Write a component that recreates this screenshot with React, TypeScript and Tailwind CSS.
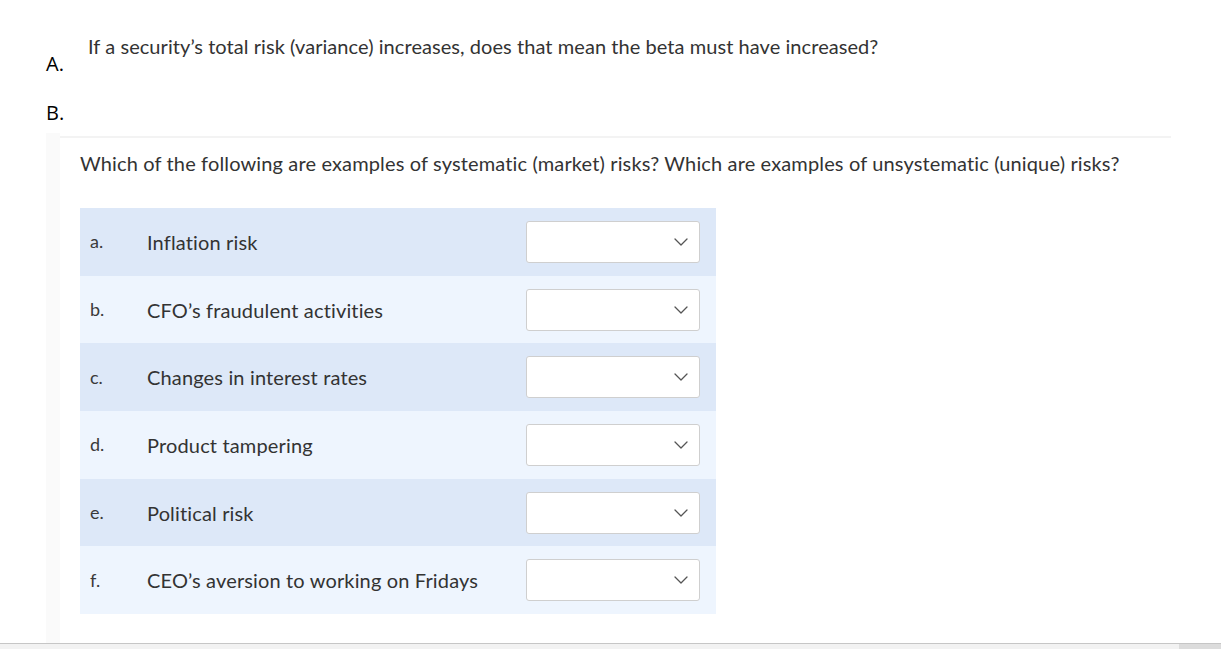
import { ChevronDown } from 'lucide-react';

const rows = [
  { letter: 'a.', text: 'Inflation risk' },
  { letter: 'b.', text: 'CFO’s fraudulent activities' },
  { letter: 'c.', text: 'Changes in interest rates' },
  { letter: 'd.', text: 'Product tampering' },
  { letter: 'e.', text: 'Political risk' },
  { letter: 'f.', text: 'CEO’s aversion to working on Fridays' }
];

const RiskRow = ({ letter, text, shaded }: { letter: string; text: string; shaded: boolean }) => (
  <div className={`flex items-center h-[67.7px] pl-[10px] pr-[16px] ${shaded ? 'bg-[#dde8f8]' : 'bg-[#eef5fe]'}`}>
    <div className="w-[57px] text-[18px] text-[#3a3a3a]">{letter}</div>
    <div className="flex-1 text-[20px] tracking-[0.15px] text-[#333]">{text}</div>
    <div className="w-[174px] h-[42px] bg-white border border-[#cfcfcf] rounded-[3px] flex items-center justify-end pr-[6px]">
      <ChevronDown size={24} strokeWidth={1.3} className="text-[#555]" />
    </div>
  </div>
);

export default function App() {
  return (
    <div className="h-[649px] flex flex-col overflow-hidden bg-white" style={{ fontFamily: 'Lato, "Open Sans", sans-serif' }}>
      <div className="flex-1 flex flex-col pl-[46px] pt-[34px]">
        <div className="flex">
          <div className="w-[42px] pt-[20px] text-[20px] text-black leading-none" style={{ fontFamily: '"Open Sans", sans-serif' }}>
            A.
          </div>
          <div className="text-[20px] tracking-[0.06px] text-[#333] leading-[24px]">
            If a security’s total risk (variance) increases, does that mean the beta must have increased?
          </div>
        </div>
        <div className="mt-[29px] text-[20px] text-black leading-none" style={{ fontFamily: '"Open Sans", sans-serif' }}>
          B.
        </div>
        <div className="mt-[10px] flex flex-1">
          <div className="w-[14px] bg-[#fafafa]" />
          <div className="w-[1111px] flex flex-col">
            <div className="h-[3px]" />
            <div className="border-t-2 border-[#f3f3f3] pl-[20px]">
              <div className="pt-[12px] text-[20px] tracking-[0.14px] text-[#333] leading-[26px]">
                Which of the following are examples of systematic (market) risks? Which are examples of unsystematic (unique) risks?
              </div>
              <div className="mt-[32px] w-[636px] flex flex-col">
                {rows.map((r, i) => (
                  <RiskRow key={r.letter} letter={r.letter} text={r.text} shaded={i % 2 === 0} />
                ))}
              </div>
            </div>
          </div>
        </div>
      </div>
      <div className="h-[6px] border-t border-[#c6c6c6] bg-[#f2f2f2] flex justify-end">
        <div className="w-[42px] bg-[#dcdcdc]" />
      </div>
    </div>
  );
}
